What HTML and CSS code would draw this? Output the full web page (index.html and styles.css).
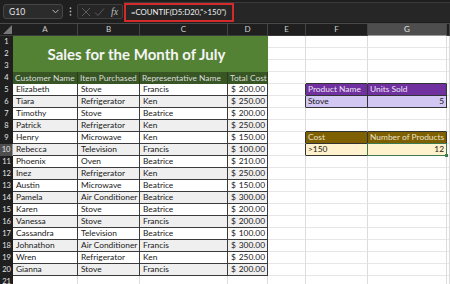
FILE: index.html
```html
<!DOCTYPE html>
<html>
<head>
<meta charset="utf-8">
<link rel="stylesheet" href="styles.css">
</head>
<body>
<div class="topbar">
  <div class="namebox"><span>G10</span><svg width="7" height="5" viewBox="0 0 7 5"><path d="M0.5 0.8 L3.5 3.8 L6.5 0.8" fill="none" stroke="#bbb" stroke-width="1"/></svg></div>
  <div class="dots"><svg width="3" height="9" viewBox="0 0 3 9"><circle cx="1.5" cy="1.2" r="0.9" fill="#aaa"/><circle cx="1.5" cy="4.5" r="0.9" fill="#aaa"/><circle cx="1.5" cy="7.8" r="0.9" fill="#aaa"/></svg></div>
  <div class="fxbox">
    <svg width="10" height="10" viewBox="0 0 10 10"><path d="M1 1 L9 9 M9 1 L1 9" stroke="#5c5c5c" stroke-width="1"/></svg>
    <svg width="11" height="10" viewBox="0 0 11 10"><path d="M1 5.5 L4 8.5 L10 1.5" fill="none" stroke="#5c5c5c" stroke-width="1"/></svg>
    <span class="fx">fx</span>
  </div>
  <div class="formula"><div class="fbox">=COUNTIF(D5:D20,"&gt;150")</div></div>
</div>
<div class="sheet">
  <div class="corner"><svg width="9" height="9" viewBox="0 0 9 9"><path d="M9 0 L9 9 L0 9 Z" fill="#777"/></svg></div>
  <div class="ch">A</div><div class="ch">B</div><div class="ch">C</div><div class="ch">D</div><div class="ch">E</div><div class="ch">F</div><div class="ch sel">G</div><div class="ch"></div>

  <div class="rh">1</div><div class="title">Sales for the Month of July</div><div class="c"></div><div class="c"></div><div class="c"></div><div class="c"></div>
  <div class="rh">2</div><div class="c"></div><div class="c"></div><div class="c"></div><div class="c"></div>
  <div class="rh">3</div><div class="c"></div><div class="c"></div><div class="c"></div><div class="c"></div>

  <div class="rh">4</div><div class="th">Customer Name</div><div class="th">Item Purchased</div><div class="th">Representative Name</div><div class="th">Total Cost</div><div class="c"></div><div class="c bb"></div><div class="c bb"></div><div class="c"></div>

  <div class="rh">5</div><div class="t">Elizabeth</div><div class="t">Stove</div><div class="t">Francis</div><div class="t cur"><span>$</span><span>200.00</span></div><div class="c br"></div><div class="ph">Product Name</div><div class="ph">Units Sold</div><div class="c"></div>
  <div class="rh">6</div><div class="t alt">Tiara</div><div class="t alt">Refrigerator</div><div class="t alt">Ken</div><div class="t alt cur"><span>$</span><span>250.00</span></div><div class="c br"></div><div class="pv">Stove</div><div class="pv num">5</div><div class="c"></div>
  <div class="rh">7</div><div class="t">Timothy</div><div class="t">Stove</div><div class="t">Beatrice</div><div class="t cur"><span>$</span><span>200.00</span></div><div class="c"></div><div class="c"></div><div class="c"></div><div class="c"></div>
  <div class="rh">8</div><div class="t alt">Patrick</div><div class="t alt">Refrigerator</div><div class="t alt">Ken</div><div class="t alt cur"><span>$</span><span>250.00</span></div><div class="c"></div><div class="c bb"></div><div class="c bb"></div><div class="c"></div>
  <div class="rh">9</div><div class="t">Henry</div><div class="t">Microwave</div><div class="t">Ken</div><div class="t cur"><span>$</span><span>150.00</span></div><div class="c br"></div><div class="gh">Cost</div><div class="gh">Number of Products</div><div class="c"></div>
  <div class="rh sel">10</div><div class="t alt">Rebecca</div><div class="t alt">Television</div><div class="t alt">Francis</div><div class="t alt cur"><span>$</span><span>100.00</span></div><div class="c br"></div><div class="gv">&gt;150</div><div class="gv num active">12</div><div class="c"></div>
  <div class="rh">11</div><div class="t">Phoenix</div><div class="t">Oven</div><div class="t">Beatrice</div><div class="t cur"><span>$</span><span>210.00</span></div><div class="c"></div><div class="c"></div><div class="c"></div><div class="c"></div>
  <div class="rh">12</div><div class="t alt">Inez</div><div class="t alt">Refrigerator</div><div class="t alt">Ken</div><div class="t alt cur"><span>$</span><span>250.00</span></div><div class="c"></div><div class="c"></div><div class="c"></div><div class="c"></div>
  <div class="rh">13</div><div class="t">Austin</div><div class="t">Microwave</div><div class="t">Beatrice</div><div class="t cur"><span>$</span><span>150.00</span></div><div class="c"></div><div class="c"></div><div class="c"></div><div class="c"></div>
  <div class="rh">14</div><div class="t alt">Pamela</div><div class="t alt">Air Conditioner</div><div class="t alt">Beatrice</div><div class="t alt cur"><span>$</span><span>300.00</span></div><div class="c"></div><div class="c"></div><div class="c"></div><div class="c"></div>
  <div class="rh">15</div><div class="t">Karen</div><div class="t">Stove</div><div class="t">Beatrice</div><div class="t cur"><span>$</span><span>200.00</span></div><div class="c"></div><div class="c"></div><div class="c"></div><div class="c"></div>
  <div class="rh">16</div><div class="t alt">Vanessa</div><div class="t alt">Stove</div><div class="t alt">Francis</div><div class="t alt cur"><span>$</span><span>200.00</span></div><div class="c"></div><div class="c"></div><div class="c"></div><div class="c"></div>
  <div class="rh">17</div><div class="t">Cassandra</div><div class="t">Television</div><div class="t">Beatrice</div><div class="t cur"><span>$</span><span>100.00</span></div><div class="c"></div><div class="c"></div><div class="c"></div><div class="c"></div>
  <div class="rh">18</div><div class="t alt">Johnathon</div><div class="t alt">Air Conditioner</div><div class="t alt">Francis</div><div class="t alt cur"><span>$</span><span>300.00</span></div><div class="c"></div><div class="c"></div><div class="c"></div><div class="c"></div>
  <div class="rh">19</div><div class="t">Wren</div><div class="t">Refrigerator</div><div class="t">Ken</div><div class="t cur"><span>$</span><span>250.00</span></div><div class="c"></div><div class="c"></div><div class="c"></div><div class="c"></div>
  <div class="rh">20</div><div class="t alt">Gianna</div><div class="t alt">Stove</div><div class="t alt">Francis</div><div class="t alt cur"><span>$</span><span>200.00</span></div><div class="c"></div><div class="c"></div><div class="c"></div><div class="c"></div>
  <div class="rh">21</div><div class="c"></div><div class="c"></div><div class="c"></div><div class="c"></div><div class="c"></div><div class="c"></div><div class="c"></div><div class="c"></div>
</div>
</body>
</html>
```
FILE: styles.css
```css
* { box-sizing: border-box; margin: 0; padding: 0; }
html, body { width: 450px; height: 284px; overflow: hidden; background: #fff; }
body { font-family: Lato, "Noto Sans", sans-serif; }

.topbar {
  height: 24px;
  background: #1f1f1f;
  border-bottom: 1px solid #4a4a4a;
  display: flex;
  align-items: center;
  padding-left: 3px;
}
.namebox {
  flex: none;
  width: 60px;
  height: 15px;
  background: #2b2b2b;
  border: 1px solid #474747;
  border-radius: 3px;
  display: flex;
  align-items: center;
  justify-content: space-between;
  padding: 0 3px 0 5px;
  color: #e6e6e6;
  font-size: 8.5px;
}
.dots { flex: none; width: 14px; display: flex; justify-content: center; align-items: center; }
.fxbox {
  flex: none;
  width: 46px;
  height: 15px;
  background: #262626;
  border: 1px solid #3e3e3e;
  border-radius: 2px;
  display: flex;
  align-items: center;
  gap: 3px;
  padding-left: 3px;
}
.fx { font-family: "Liberation Serif", serif; font-style: italic; color: #bdbdbd; font-size: 10px; margin-left: 3px; }
.formula {
  flex: 1;
  height: 20px;
  margin-left: 1px;
  background: #262626;
  border-top: 1px solid #3a3a3a;
}
.fbox {
  width: 110px;
  height: 19px;
  border: 2px solid #d42a2a;
  color: #f2f2f2;
  font-size: 7.8px;
  line-height: 15px;
  padding-left: 5px;
  white-space: nowrap;
  overflow: hidden;
}

.sheet {
  display: grid;
  grid-template-columns: 13px 65px 62px 88px 40px 38px 62px 79px 3px;
  grid-auto-rows: 12px;
  font-size: 8.4px;
  color: #1a1a1a;
}
.corner { background: #1f1f1f; display: flex; align-items: flex-end; justify-content: flex-end; padding: 0 1px 1px 0; border-bottom: 1px solid #3a3a3a; }
.ch {
  background: #1f1f1f;
  color: #cfcfcf;
  font-size: 8px;
  text-align: center;
  line-height: 11px;
  border-right: 1px solid #444;
  border-bottom: 1px solid #3a3a3a;
}
.ch.sel { background: #4e4e4e; border-bottom: 1px solid #9a9a9a; color: #e8e8e8; }
.rh {
  background: #1f1f1f;
  color: #e6e6e6;
  font-size: 7.5px;
  text-align: center;
  line-height: 12px;
}
.rh.sel { background: #4e4e4e; border-right: 1px solid #9a9a9a; }

.c { border-right: 1px solid #dcdcdc; border-bottom: 1px solid #e6e6e6; background: #fff; }
.c.br { border-right-color: #333; }
.c.bb { border-bottom-color: #333; }

.title {
  grid-column: span 4;
  grid-row: span 3;
  background: #548235;
  color: #f4f4f4;
  font-weight: 700;
  font-size: 15px;
  display: flex;
  align-items: center;
  justify-content: center;
  padding-right: 8px;
}
.th {
  background: #375623;
  color: #dcdcdc;
  border-right: 1px solid #2a401b;
  line-height: 12px;
  padding-left: 2px;
  white-space: nowrap;
  overflow: hidden;
}
.t {
  background: #fff;
  border-right: 1px solid #3a3a3a;
  border-bottom: 1px solid #3a3a3a;
  line-height: 11px;
  padding-left: 3px;
  white-space: nowrap;
  overflow: hidden;
}
.t.alt { background: #efefef; }
.cur { display: flex; justify-content: space-between; padding: 0 2px 0 3px; }

.ph {
  background: #7030a0;
  color: #ece4f4;
  border-right: 1px solid #333;
  border-bottom: 1px solid #333;
  line-height: 11px;
  padding-left: 2px;
  white-space: nowrap;
}
.pv {
  background: #d2c7f3;
  border-right: 1px solid #333;
  border-bottom: 1px solid #333;
  line-height: 11px;
  padding-left: 2px;
}
.gh {
  background: #7f6000;
  color: #e9e2cc;
  border-right: 1px solid #333;
  border-bottom: 1px solid #333;
  line-height: 11px;
  padding-left: 2px;
  white-space: nowrap;
}
.gv {
  background: #fff2cc;
  border-right: 1px solid #333;
  border-bottom: 1px solid #333;
  line-height: 11px;
  padding-left: 2px;
}
.num { text-align: right; padding-right: 2px; }
.active { position: relative; }
.active::after {
  content: "";
  position: absolute;
  left: -1px; top: -1px; right: -1px; bottom: -1px;
  border: 1px solid #3d7a52;
}
.active::before {
  content: "";
  position: absolute;
  right: -2px; bottom: -2px;
  width: 3px; height: 3px;
  background: #3d7a52;
  z-index: 1;
}
```
